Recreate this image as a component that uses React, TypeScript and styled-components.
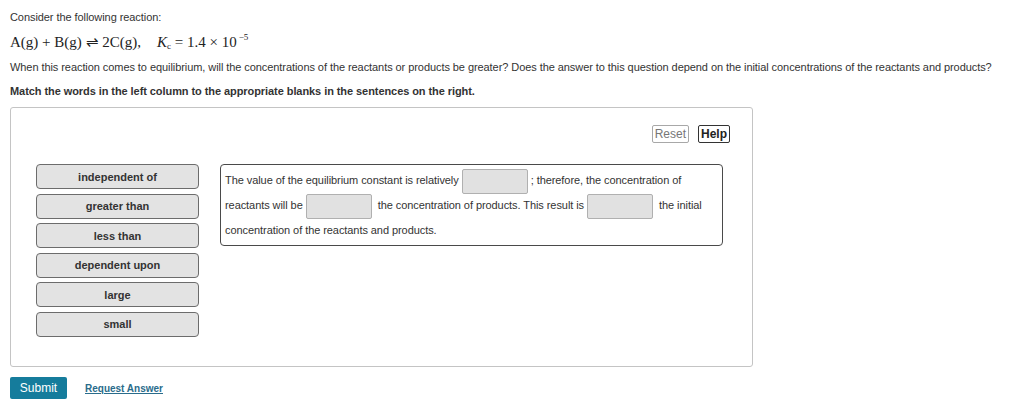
import React from 'react';
import styled, {createGlobalStyle} from 'styled-components';

const GlobalStyle = createGlobalStyle`
  body {
    margin: 0;
    background: #fff;
    font-family: 'Liberation Sans', Arial, sans-serif;
    color: #333;
  }
`;

const Page = styled.div`
  padding: 9px 10px 10px 10px;
  width: 1017px;
  box-sizing: border-box;
`;

const Text = styled.p<{$bold?: boolean}>`
  margin: 0;
  font-size: 11px;
  line-height: 16px;
  letter-spacing: -0.07px;
  font-weight: ${(p) => (p.$bold ? 'bold' : 'normal')};
  white-space: nowrap;
`;

const Equation = styled.div`
  margin: 8px 0 8px 0;
  font-family: 'Liberation Serif', 'Times New Roman', serif;
  font-size: 15px;
  line-height: 18px;
  color: #222;
  white-space: nowrap;
  sub,
  sup {
    font-size: 9px;
    line-height: 0;
  }
  sup {
    vertical-align: 7px;
    margin-left: 2px;
  }
  sub {
    vertical-align: -2px;
  }
`;

const Gap = styled.span<{$w: number}>`
  display: inline-block;
  width: ${(p) => p.$w}px;
`;

const Panel = styled.div`
  margin-top: 8px;
  width: 743px;
  height: 260px;
  box-sizing: border-box;
  border: 1px solid #c4c4c4;
  border-radius: 3px;
  padding: 17px 22px 0 25px;
`;

const Toolbar = styled.div`
  display: flex;
  justify-content: flex-end;
  gap: 9px;
`;

const ToolButton = styled.button<{$strong?: boolean}>`
  font-family: 'Liberation Sans', Arial, sans-serif;
  font-size: 12px;
  height: 18px;
  padding: 0 2px;
  background: #fff;
  border: 1px solid ${(p) => (p.$strong ? '#333' : '#a8a8a8')};
  border-radius: 2px;
  color: ${(p) => (p.$strong ? '#222' : '#777')};
  font-weight: ${(p) => (p.$strong ? 'bold' : 'normal')};
  line-height: 16px;
`;

const Workspace = styled.div`
  display: flex;
  align-items: flex-start;
  gap: 21px;
  margin-top: 21px;
`;

const WordList = styled.div`
  display: flex;
  flex-direction: column;
  gap: 4.5px;
`;

const Word = styled.div`
  width: 163px;
  height: 25px;
  box-sizing: border-box;
  background: #e3e3e3;
  border: 1px solid #6c6c6c;
  border-radius: 4px;
  display: flex;
  align-items: center;
  justify-content: center;
  font-size: 11px;
  font-weight: bold;
  color: #333;
`;

const Sentence = styled.div`
  width: 503px;
  box-sizing: border-box;
  border: 1px solid #4a4a4a;
  border-radius: 4px;
  padding: 4px 4px 3px 4px;
  font-size: 11px;
  line-height: 23px;
  letter-spacing: -0.07px;
  color: #333;
`;

const Blank = styled.span`
  display: inline-block;
  width: 66px;
  height: 25px;
  box-sizing: border-box;
  vertical-align: middle;
  background: #e1e1e1;
  border: 1px solid #b0b0b0;
  border-radius: 2px;
  margin: 0 3px 0 3px;
`;

const Actions = styled.div`
  display: flex;
  align-items: center;
  gap: 18px;
  margin-top: 10px;
`;

const Submit = styled.button`
  font-family: 'Liberation Sans', Arial, sans-serif;
  background: #157c9c;
  color: #fff;
  border: none;
  border-radius: 2px;
  width: 57px;
  height: 22px;
  font-size: 12px;
  padding: 0;
`;

const LinkText = styled.a`
  font-size: 10px;
  font-weight: bold;
  color: #2a6c8b;
  text-decoration: underline;
`;

const words = [
  'independent of',
  'greater than',
  'less than',
  'dependent upon',
  'large',
  'small',
];

export default function App() {
  return (
    <Page>
      <GlobalStyle />
      <Text>Consider the following reaction:</Text>
      <Equation>
        A(g) + B(g) ⇌ 2C(g),
        <Gap $w={16} />
        <i>K</i>
        <sub>c</sub> = 1.4 × 10<sup>−5</sup>
      </Equation>
      <Text>
        When this reaction comes to equilibrium, will the concentrations of the
        reactants or products be greater? Does the answer to this question
        depend on the initial concentrations of the reactants and products?
      </Text>
      <Text $bold style={{marginTop: 8}}>
        Match the words in the left column to the appropriate blanks in the
        sentences on the right.
      </Text>
      <Panel>
        <Toolbar>
          <ToolButton>Reset</ToolButton>
          <ToolButton $strong>Help</ToolButton>
        </Toolbar>
        <Workspace>
          <WordList>
            {words.map((w) => (
              <Word key={w}>{w}</Word>
            ))}
          </WordList>
          <Sentence>
            The value of the equilibrium constant is relatively
            <Blank />; therefore, the concentration of reactants will be
            <Blank /> the concentration of products. This result is
            <Blank /> the initial concentration of the reactants and products.
          </Sentence>
        </Workspace>
      </Panel>
      <Actions>
        <Submit>Submit</Submit>
        <LinkText href="#">Request Answer</LinkText>
      </Actions>
    </Page>
  );
}
